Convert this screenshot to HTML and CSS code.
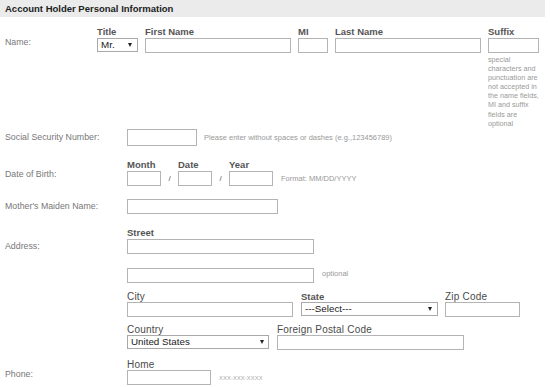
FILE: index.html
```html
<!DOCTYPE html>
<html>
<head>
<meta charset="utf-8">
<link rel="stylesheet" href="styles.css">
</head>
<body>
<div class="page">
  <div class="header">Account Holder Personal Information</div>

  <div class="row row-name">
    <div class="lbl lbl-name">Name:</div>
    <div class="fields">
      <div class="field w-title">
        <div class="flabel">Title</div>
        <div class="select"><span>Mr.</span><i class="arrow"></i></div>
      </div>
      <div class="field w-first">
        <div class="flabel">First Name</div>
        <div class="input"></div>
      </div>
      <div class="field w-mi">
        <div class="flabel">MI</div>
        <div class="input"></div>
      </div>
      <div class="field w-last">
        <div class="flabel">Last Name</div>
        <div class="input"></div>
      </div>
      <div class="field w-suffix">
        <div class="flabel">Suffix</div>
        <div class="input"></div>
        <div class="note">special characters and punctuation are not accepted in the name fields, MI and suffix fields are optional</div>
      </div>
    </div>
  </div>

  <div class="row row-ssn">
    <div class="lbl">Social Security Number:</div>
    <div class="inline">
      <div class="input w-ssn"></div>
      <span class="hint">Please enter without spaces or dashes (e.g.,123456789)</span>
    </div>
  </div>

  <div class="row row-dob">
    <div class="lbl lbl-dob">Date of Birth:</div>
    <div class="inline bottom">
      <div class="field w-month">
        <div class="flabel">Month</div>
        <div class="input"></div>
      </div>
      <span class="slash">/</span>
      <div class="field w-date">
        <div class="flabel">Date</div>
        <div class="input"></div>
      </div>
      <span class="slash">/</span>
      <div class="field w-year">
        <div class="flabel">Year</div>
        <div class="input"></div>
      </div>
      <span class="hint hint-fmt">Format: MM/DD/YYYY</span>
    </div>
  </div>

  <div class="row row-maiden">
    <div class="lbl">Mother's Maiden Name:</div>
    <div class="input w-maiden"></div>
  </div>

  <div class="row row-addr">
    <div class="lbl lbl-addr">Address:</div>
    <div class="addr">
      <div class="field w-street">
        <div class="flabel">Street</div>
        <div class="input"></div>
      </div>
      <div class="inline street2">
        <div class="input w-street"></div>
        <span class="hint hint-opt">optional</span>
      </div>
      <div class="inline group-city">
        <div class="field w-city">
          <div class="flabel light">City</div>
          <div class="input"></div>
        </div>
        <div class="field w-state">
          <div class="flabel">State</div>
          <div class="select"><span>---Select---</span><i class="arrow"></i></div>
        </div>
        <div class="field w-zip">
          <div class="flabel light">Zip Code</div>
          <div class="input"></div>
        </div>
      </div>
      <div class="inline group-country">
        <div class="field w-country">
          <div class="flabel light">Country</div>
          <div class="select sel-country"><span>United States</span><i class="arrow"></i></div>
        </div>
        <div class="field w-postal">
          <div class="flabel light">Foreign Postal Code</div>
          <div class="input"></div>
        </div>
      </div>
    </div>
  </div>

  <div class="row row-phone">
    <div class="lbl lbl-phone">Phone:</div>
    <div class="field">
      <div class="flabel light">Home</div>
      <div class="inline">
        <div class="input w-home"></div>
        <span class="hint hint-phone">XXX-XXX-XXXX</span>
      </div>
    </div>
  </div>
</div>
</body>
</html>
```

FILE: styles.css
```css
html, body {
  margin: 0;
  padding: 0;
  background: #ffffff;
}
body {
  font-family: "Liberation Sans", Arial, sans-serif;
  color: #333;
}
.page {
  width: 545px;
}
.header {
  height: 17px;
  line-height: 17px;
  background: #ebebeb;
  padding-left: 5px;
  font-size: 9.5px;
  font-weight: bold;
  color: #222;
}
.row {
  display: flex;
  align-items: flex-start;
}
.lbl {
  box-sizing: border-box;
  width: 127px;
  flex: none;
  padding-left: 5px;
  font-size: 8.8px;
  line-height: 11px;
  color: #777;
}
.lbl-name {
  width: 97px;
  padding-top: 11px;
}
.fields {
  display: flex;
  align-items: flex-start;
}
.field {
  display: flex;
  flex-direction: column;
  flex: none;
}
.flabel {
  font-size: 9.5px;
  font-weight: bold;
  line-height: 12px;
  color: #555;
}
.flabel.light {
  font-weight: normal;
  font-size: 10px;
  line-height: 10px;
  letter-spacing: 0.2px;
  color: #4a4a4a;
}
.input {
  box-sizing: border-box;
  height: 15px;
  border: 1px solid #b4b4b4;
  background: #fff;
}
.select {
  box-sizing: border-box;
  height: 14px;
  border: 1px solid #a9a9a9;
  background: #fff;
  display: flex;
  align-items: center;
  justify-content: space-between;
  padding: 0 5px 0 3px;
  font-size: 9.8px;
  line-height: 12px;
  color: #222;
}
.arrow {
  width: 0;
  height: 0;
  border-left: 2.5px solid transparent;
  border-right: 2.5px solid transparent;
  border-top: 4px solid #222;
}
.note {
  width: 54px;
  margin-top: 2px;
  font-size: 7.2px;
  line-height: 9.1px;
  color: #999;
}
.hint {
  font-size: 7.5px;
  color: #999;
}

/* name row */
.row-name { margin-top: 9px; height: 100px; }
.w-title { width: 41px; margin-right: 7px; }
.w-first { width: 146px; margin-right: 7px; }
.w-mi { width: 30px; margin-right: 7px; }
.w-last { width: 146px; margin-right: 7px; }
.w-suffix { width: 51px; }

.inline {
  display: flex;
  align-items: center;
}
.inline.bottom {
  align-items: flex-end;
}

/* SSN */
.row-ssn { margin-top: 3px; align-items: center; }
.w-ssn { width: 70px; height: 17px; margin-right: 7px; }

/* DOB */
.row-dob { margin-top: 13px; }
.lbl-dob { padding-top: 10px; }
.w-month { width: 34px; }
.w-date { width: 34px; }
.w-year { width: 44px; }
.slash {
  width: 17px;
  text-align: center;
  font-size: 8px;
  line-height: 15px;
  color: #555;
}
.hint-fmt {
  margin-left: 8px;
  line-height: 15px;
}

/* maiden */
.row-maiden { margin-top: 13px; align-items: center; }
.w-maiden { width: 151px; }

/* address */
.row-addr { margin-top: 13px; }
.lbl-addr { padding-top: 14px; }
.addr {
  display: flex;
  flex-direction: column;
}
.w-street { width: 187px; }
.street2 { margin-top: 14px; }
.hint-opt { margin-left: 8px; margin-top: -4px; }
.group-city { margin-top: 9px; align-items: flex-end; }
.w-city { width: 166px; margin-right: 8px; }
.w-state { width: 137px; margin-right: 7px; }
.w-state .flabel { line-height: 10px; }
.w-zip { width: 75px; }
.w-state .select { height: 14px; margin-bottom: 1px; }
.group-country { margin-top: 8px; align-items: flex-end; }
.w-country { width: 142px; margin-right: 8px; }
.w-postal { width: 187px; }
.sel-country { height: 14px; margin-bottom: 1px; padding-right: 4px; }

/* phone */
.row-phone { margin-top: 10px; }
.lbl-phone { padding-top: 9px; }
.w-home { width: 84px; height: 15px; margin-right: 8px; }
.hint-phone { font-size: 5.8px; color: #aaa; letter-spacing: 0.1px; }
```
